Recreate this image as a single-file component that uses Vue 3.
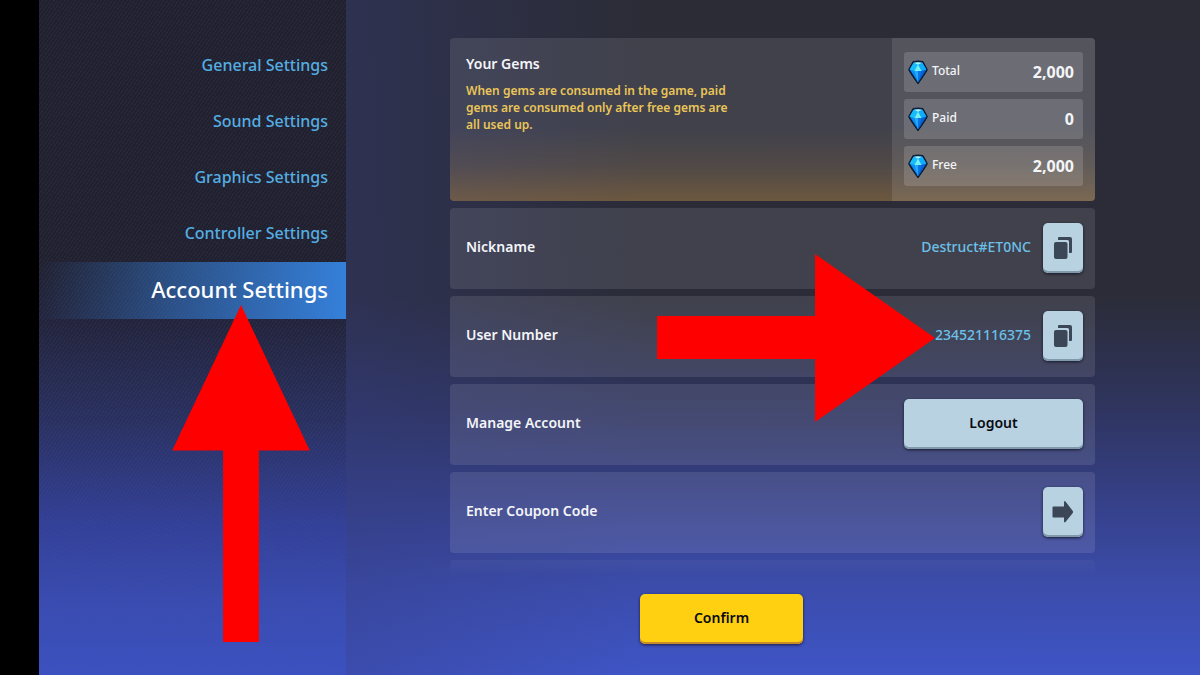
<script setup>
const sections = [
  { label: 'General Settings' },
  { label: 'Sound Settings' },
  { label: 'Graphics Settings' },
  { label: 'Controller Settings' },
  { label: 'Account Settings', active: true },
]

const gems = [
  { label: 'Total', amount: '2,000' },
  { label: 'Paid', amount: '0' },
  { label: 'Free', amount: '2,000' },
]

const details = [
  { label: 'Nickname', value: 'Destruct#ET0NC' },
  { label: 'User Number', value: '234521116375' },
]
</script>

<template>
  <div class="screen">
    <aside class="sidebar">
      <nav aria-label="Settings">
        <a
          v-for="s in sections"
          :key="s.label"
          href="#"
          :class="['tab', { active: s.active }]"
          :aria-current="s.active ? 'page' : undefined"
        >{{ s.label }}</a>
      </nav>
    </aside>

    <main class="content">
      <div class="list">
        <section class="gems">
          <div class="gems-info">
            <h2>Your Gems</h2>
            <p>When gems are consumed in the game, paid gems are consumed only after free gems are all used up.</p>
          </div>
          <dl class="totals">
            <div v-for="g in gems" :key="g.label" class="total">
              <svg class="gem" viewBox="0 0 20 24" aria-hidden="true">
                <path d="M5 1 Q10 0 15 1 L19.300 9 Q19.300 10.500 10 23.400 Q.7 10.500 .7 9 Z" fill="#0a1c38" stroke="#0a1c38" stroke-linejoin="round" />
                <path d="M5.600 2.200 Q10 1.200 14.400 2.200 L18.300 9 L10 21.800 L1.700 9 Z" fill="#0b8cf2" />
                <path d="M5.600 2.200 Q10 1.200 14.400 2.200 L10 4.500 Z" fill="#a9f6fb" />
                <path d="M5.600 2.200 L10 4.500 L6.500 10.500 L1.700 9 Z" fill="#17bdfb" />
                <path d="M14.400 2.200 L10 4.500 L13.500 10.500 L18.300 9 Z" fill="#10aefa" />
                <path d="M10 4 L13.500 10.500 L6.500 10.500 Z" fill="#74f0f4" />
                <path d="M6.500 10.500 L10 10.500 L10 21.800 Z" fill="#25a9fc" />
                <path d="M13.500 10.500 L10 10.500 L10 21.800 Z" fill="#0a74e6" />
                <path d="M13.500 10.500 L18.300 9 L10 21.800 Z" fill="#0560d4" />
              </svg>
              <dt>{{ g.label }}</dt>
              <dd>{{ g.amount }}</dd>
            </div>
          </dl>
        </section>

        <section v-for="d in details" :key="d.label" class="row">
          <h2>{{ d.label }}</h2>
          <span class="value">{{ d.value }}</span>
          <button class="btn square" :aria-label="'Copy ' + d.label">
            <svg class="icon" viewBox="0 0 20 24" aria-hidden="true">
              <path d="M5 2 Q5 1 6 1 H17 Q19 1 19 3 V16 Q19 17 18 17 H16 V5.500 Q16 4 14.500 4 H5 Z" fill="#3b4757" />
              <rect x="1" y="6" width="13.500" height="17" rx="2" fill="#3b4757" />
            </svg>
          </button>
        </section>

        <section class="row">
          <h2>Manage Account</h2>
          <button class="btn wide">Logout</button>
        </section>

        <section class="row">
          <h2>Enter Coupon Code</h2>
          <button class="btn square" aria-label="Enter Coupon Code">
            <svg class="arrow-icon" viewBox="0 0 22 24" aria-hidden="true">
              <path d="M1.500 6.500 H12 V2 Q12.500 .5 13.500 1.500 L20.800 11 Q21.300 12 20.800 13 L13.500 22 Q12.500 23 12 21.500 V17.500 H1.500 Q.5 17.500 .5 16.500 V7.500 Q.5 6.500 1.500 6.500 Z" fill="#3b4757" />
            </svg>
          </button>
        </section>

        <section class="row peek"></section>
      </div>

      <button class="confirm">Confirm</button>
    </main>

    <svg class="pointer up" viewBox="0 0 138 338" aria-hidden="true">
      <path d="M69 0 L138 146 H87 V338 H51 V146 H0 Z" fill="#f00" />
    </svg>
    <svg class="pointer right" viewBox="0 0 278 168" aria-hidden="true">
      <path d="M278 84 L158 168 V105 H0 V62 H158 V0 Z" fill="#f00" />
    </svg>
  </div>
</template>

<style>
body {
  margin: 0;
  background: #000;
}
</style>

<style scoped>
* {
  box-sizing: border-box;
}

.screen {
  position: relative;
  display: flex;
  min-height: 100vh;
  padding-left: 39px;
  background: #000;
  font-family: "Noto Sans", "Noto Sans CJK SC", sans-serif;
  font-weight: 500;
  color: #f4f5f8;
}

h2, p, dl, dt, dd {
  margin: 0;
  font-size: 14px;
  font-weight: 500;
}

h2 {
  font-weight: 600;
}

.sidebar {
  flex: 0 0 307px;
  padding-top: 38px;
  background:
    repeating-linear-gradient(125deg, rgba(80, 90, 130, 0.14) 0 1px, transparent 1px 3px),
    linear-gradient(#20202e 0%, #20202e 38%, #23243c 48%, #29305f 62%, #33409a 78%, #394cb4 90%, #3b50c2 100%);
}

.tab {
  display: flex;
  align-items: center;
  justify-content: flex-end;
  height: 56px;
  padding: 0 18px 2px 0;
  font-size: 16px;
  color: #55aee2;
  text-decoration: none;
}

.tab.active {
  height: 57px;
  padding-bottom: 4px;
  font-size: 22px;
  color: #fff;
  background: linear-gradient(90deg, rgba(53, 128, 218, 0) 0%, rgba(53, 128, 218, 0.5) 45%, #3580da 100%);
}

.content {
  flex: 1;
  display: flex;
  flex-direction: column;
  align-items: center;
  padding: 38px 105px 30px 104px;
  background:
    linear-gradient(90deg, rgba(52, 60, 130, 0.35), transparent 35%),
    linear-gradient(#2b2c36 0%, #2b2c38 44%, #2f3560 61%, #36418a 75%, #3b4cab 87%, #3f55c6 100%);
}

.list {
  display: flex;
  flex-direction: column;
  gap: 7px;
  width: 100%;
}

.gems {
  display: flex;
  height: 163px;
  border-radius: 4px;
  overflow: hidden;
  background:
    linear-gradient(transparent 55%, rgba(190, 130, 40, 0.12) 78%, rgba(190, 130, 40, 0.35) 100%),
    rgba(255, 255, 255, 0.1);
}

.gems-info {
  flex: 1;
  padding: 15px 16px;
}

.gems-info h2 {
  line-height: 22px;
}

.gems-info p {
  max-width: 268px;
  margin-top: 7px;
  font-size: 12px;
  font-weight: 600;
  line-height: 17px;
  color: #ebc658;
}

.totals {
  display: flex;
  flex-direction: column;
  gap: 7px;
  width: 203px;
  padding: 14px 12px;
  background: rgba(255, 255, 255, 0.1);
}

.total {
  display: flex;
  align-items: center;
  height: 40px;
  padding: 0 9px 0 4px;
  border-radius: 3px;
  background: rgba(255, 255, 255, 0.15);
}

.gem {
  width: 20px;
  height: 25px;
  margin-right: 4px;
}

.total dt {
  height: 40px;
  font-size: 12px;
  line-height: 38px;
}

.total dd {
  margin-left: auto;
  font-size: 16px;
  font-weight: 700;
}

.row {
  display: flex;
  align-items: center;
  height: 81px;
  padding: 0 12px 2px 16px;
  border-radius: 4px;
  background: rgba(255, 255, 255, 0.1);
}

.row h2 {
  flex: 1;
  padding-bottom: 3px;
}

.value {
  margin-right: 12px;
  padding-bottom: 3px;
  font-size: 14px;
  color: #6cc0e8;
}

.btn,
.confirm {
  display: flex;
  align-items: center;
  justify-content: center;
  height: 50px;
  padding: 0 0 3px;
  border: 0;
  border-radius: 5px;
  font: inherit;
  font-size: 14px;
  font-weight: 600;
  color: #080a10;
}

.btn {
  background: #b9d2e1;
  box-shadow: inset 0 -2px #8199aa, 0 1px 3px rgba(10, 14, 30, 0.8);
}

.square {
  width: 40px;
  padding: 0;
}

.wide {
  width: 179px;
}

.icon {
  width: 20px;
  height: 24px;
}

.arrow-icon {
  width: 22px;
  height: 24px;
}

.peek {
  height: 16px;
  background: linear-gradient(rgba(255, 255, 255, 0.04), transparent);
}

.confirm {
  width: 163px;
  margin: 18px 102px 0 0;
  background: #ffcf12;
  box-shadow: inset 0 -2px #c98a2c, 0 1px 3px rgba(10, 14, 40, 0.8);
}

.pointer {
  position: absolute;
  pointer-events: none;
}

.up {
  left: 172px;
  top: 305px;
  width: 138px;
  height: 337px;
}

.right {
  left: 657px;
  top: 254px;
  width: 278px;
  height: 168px;
}
</style>
